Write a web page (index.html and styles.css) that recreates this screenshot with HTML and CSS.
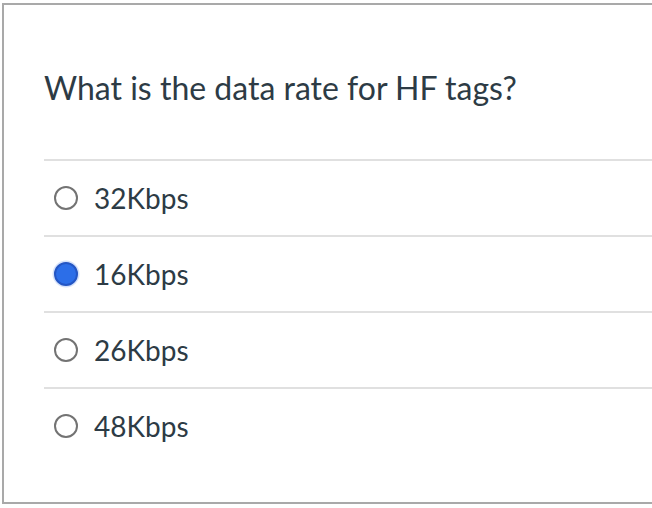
FILE: index.html
```html
<!DOCTYPE html>
<html lang="en">
<head>
<meta charset="utf-8">
<title>Quiz question</title>
<link rel="stylesheet" href="styles.css">
</head>
<body>
<div class="question">
  <div class="q-text">What is the data rate for HF tags?</div>
  <div class="answers">
    <label class="answer"><span class="radio"></span><span class="label">32Kbps</span></label>
    <label class="answer"><span class="radio checked"></span><span class="label">16Kbps</span></label>
    <label class="answer"><span class="radio"></span><span class="label">26Kbps</span></label>
    <label class="answer"><span class="radio"></span><span class="label">48Kbps</span></label>
  </div>
</div>
</body>
</html>
```
FILE: styles.css
```css
html, body {
  margin: 0;
  padding: 0;
  background: #ffffff;
  overflow: hidden;
}
body {
  font-family: Lato, "Open Sans", sans-serif;
  color: #2d3b45;
}
.question {
  margin: 3px 0 0 2px;
  width: calc(100% - 2px);
  height: 501px;
  box-sizing: border-box;
  border: 2px solid #a9a9a9;
  border-right: none;
  padding: 64px 0 0 40px;
}
.q-text {
  font-size: 32px;
  line-height: 1.2;
}
.answers {
  margin-top: 52px;
  display: flex;
  flex-direction: column;
}
.answer {
  height: 76px;
  box-sizing: border-box;
  border-top: 2px solid #e0e0e0;
  display: flex;
  align-items: center;
  padding-left: 10px;
  gap: 16px;
}
.radio {
  width: 24px;
  height: 24px;
  box-sizing: border-box;
  border: 2px solid #737373;
  border-radius: 50%;
  flex: none;
}
.radio.checked {
  background: #2c6ee8;
  border-color: #2456c4;
  box-shadow: 0 0 0 1.5px #d6e2fa;
}
.label {
  font-size: 28px;
  line-height: 1.2;
}
```
